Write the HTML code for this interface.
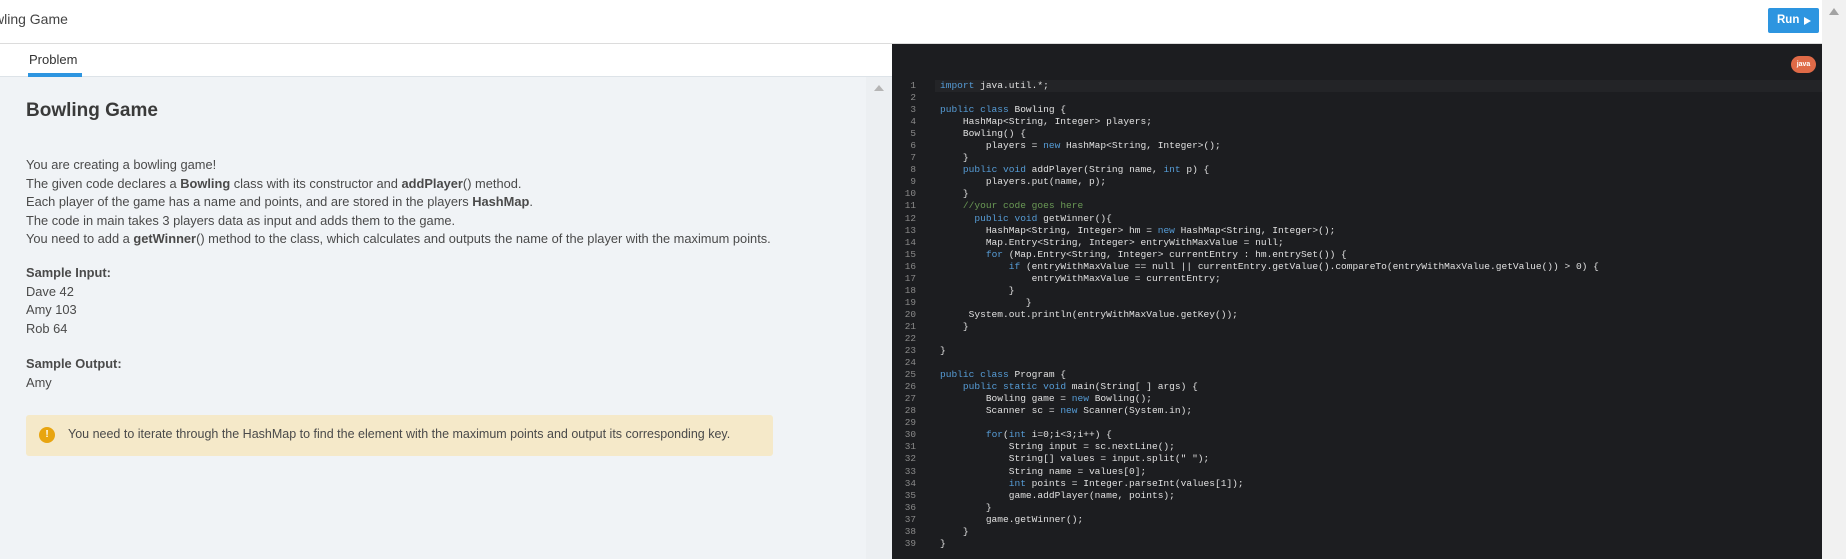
<!DOCTYPE html>
<html><head><meta charset="utf-8"><style>
*{margin:0;padding:0;box-sizing:border-box}
body{width:1846px;height:559px;overflow:hidden;background:#fff;font-family:"Liberation Sans",sans-serif;position:relative;color:#333}
.hdr{position:absolute;left:0;top:0;width:1846px;height:44px;background:#fff;border-bottom:1px solid #dcdcdc}
.title{position:absolute;left:-6px;top:11px;font-size:14px;color:#444}
.run{position:absolute;left:1768px;top:8px;width:51px;height:25px;background:#2d95e0;border-radius:2px;color:#fff;font-weight:bold;font-size:11.5px;line-height:25px;padding-left:9px}
.run:after{content:"";position:absolute;right:8px;top:8.5px;border-left:7px solid #fff;border-top:4px solid transparent;border-bottom:4px solid transparent}
.rsb{position:absolute;left:1822px;top:0;width:24px;height:559px;background:#f1f1f1}
.rsb:before{content:"";position:absolute;left:7px;top:8px;border-bottom:7px solid #a3a3a3;border-left:5px solid transparent;border-right:5px solid transparent}
.tabs{position:absolute;left:0;top:45px;width:892px;height:32px;background:#fff;border-bottom:1px solid #dde3e8}
.tab{position:absolute;left:29px;top:7px;font-size:13px;color:#333}
.ul{position:absolute;left:28px;top:28px;width:54px;height:4px;background:#2d95e0}
.left{position:absolute;left:0;top:77px;width:892px;height:482px;background:#f0f3f6}
.lsb{position:absolute;left:866px;top:77px;width:26px;height:482px;background:#eceff2}
.lsb:before{content:"";position:absolute;left:8px;top:8px;border-bottom:6px solid #b5b5b5;border-left:5px solid transparent;border-right:5px solid transparent}
h1{position:absolute;left:26px;top:100px;font-size:19px;color:#3a3a3a;font-weight:bold}
.p{position:absolute;left:26px;font-size:12.85px;color:#4a4a4a;line-height:18.5px;white-space:nowrap}
.warn{position:absolute;left:26px;top:415px;width:747px;height:41px;background:#f5e9c9;border-radius:3px}
.warn .ic{position:absolute;left:13px;top:12px;width:16px;height:16px;border-radius:50%;background:#e8a510;color:#fff;font-size:10px;font-weight:bold;text-align:center;line-height:16px}
.warn .t{position:absolute;left:42px;top:12px;font-size:12.5px;color:#4a4a4a;white-space:nowrap}
.dark{position:absolute;left:892px;top:44px;width:930px;height:515px;background:#1c1d20}
.java{position:absolute;left:1791px;top:56px;width:25px;height:17px;border-radius:9px;background:#df6a47;color:#fff;font-size:7px;font-weight:bold;text-align:center;line-height:17px}
.hl{position:absolute;left:935px;top:80px;width:887px;height:12px;background:#232427}
.ln{position:absolute;left:894px;top:80px;width:22px;text-align:right;font-family:"Liberation Mono",monospace;font-size:9.4px;line-height:12.05px;color:#8a8a8a;white-space:pre}
.code{position:absolute;left:940px;top:80px;font-family:"Liberation Mono",monospace;font-size:9.55px;line-height:12.05px;color:#e0e0e0;white-space:pre}
.k{color:#569cd6}.c{color:#6a9955}
</style></head><body>
<div class="hdr"><div class="title">wling Game</div><div class="run">Run</div></div>
<div class="rsb"></div>
<div class="tabs"><div class="tab">Problem</div><div class="ul"></div></div>
<div class="left"></div><div class="lsb"></div>
<h1>Bowling Game</h1>
<div class="p" style="top:156px">You are creating a bowling game!<br>The given code declares a <b>Bowling</b> class with its constructor and <b>addPlayer</b>() method.<br>Each player of the game has a name and points, and are stored in the players <b>HashMap</b>.<br>The code in main takes 3 players data as input and adds them to the game.<br>You need to add a <b>getWinner</b>() method to the class, which calculates and outputs the name of the player with the maximum points.</div>
<div class="p" style="top:264px"><b>Sample Input:</b><br>Dave 42<br>Amy 103<br>Rob 64</div>
<div class="p" style="top:355px"><b>Sample Output:</b><br>Amy</div>
<div class="warn"><div class="ic">!</div><div class="t">You need to iterate through the HashMap to find the element with the maximum points and output its corresponding key.</div></div>
<div class="dark"></div>
<div class="hl"></div>
<div class="java">java</div>
<div class="ln">1
2
3
4
5
6
7
8
9
10
11
12
13
14
15
16
17
18
19
20
21
22
23
24
25
26
27
28
29
30
31
32
33
34
35
36
37
38
39</div>
<div class="code"><span class="k">import</span> java.util.*;

<span class="k">public class</span> Bowling {
    HashMap&lt;String, Integer&gt; players;
    Bowling() {
        players = <span class="k">new</span> HashMap&lt;String, Integer&gt;();
    }
    <span class="k">public void</span> addPlayer(String name, <span class="k">int</span> p) {
        players.put(name, p);
    }
    <span class="c">//your code goes here</span>
      <span class="k">public void</span> getWinner(){
        HashMap&lt;String, Integer&gt; hm = <span class="k">new</span> HashMap&lt;String, Integer&gt;();
        Map.Entry&lt;String, Integer&gt; entryWithMaxValue = null;
        <span class="k">for</span> (Map.Entry&lt;String, Integer&gt; currentEntry : hm.entrySet()) {
            <span class="k">if</span> (entryWithMaxValue == null || currentEntry.getValue().compareTo(entryWithMaxValue.getValue()) &gt; 0) {
                entryWithMaxValue = currentEntry;
            }
               }
     System.out.println(entryWithMaxValue.getKey());
    }

}

<span class="k">public class</span> Program {
    <span class="k">public static void</span> main(String[ ] args) {
        Bowling game = <span class="k">new</span> Bowling();
        Scanner sc = <span class="k">new</span> Scanner(System.in);

        <span class="k">for</span>(<span class="k">int</span> i=0;i&lt;3;i++) {
            String input = sc.nextLine();
            String[] values = input.split(" ");
            String name = values[0];
            <span class="k">int</span> points = Integer.parseInt(values[1]);
            game.addPlayer(name, points);
        }
        game.getWinner();
    }
}</div>
</body></html>
